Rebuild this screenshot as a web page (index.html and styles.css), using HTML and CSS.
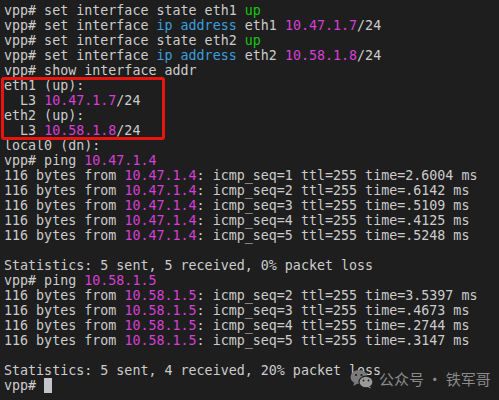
FILE: index.html
```
<!DOCTYPE html>
<html>
<head>
<meta charset="utf-8">
<link rel="stylesheet" href="styles.css">
</head>
<body>
<div class="term">
<pre class="out">vpp# set interface state eth1 <span class="g">up</span>
vpp# set interface <span class="c">ip address</span> eth1 <span class="m">10.47.1.7</span>/24
vpp# set interface state eth2 <span class="g">up</span>
vpp# set interface <span class="c">ip address</span> eth2 <span class="m">10.58.1.8</span>/24
vpp# show interface addr
eth1 (up):
  L3 <span class="m">10.47.1.7</span>/24
eth2 (up):
  L3 <span class="m">10.58.1.8</span>/24
local0 (dn):
vpp# ping <span class="m">10.47.1.4</span>
116 bytes from <span class="m">10.47.1.4</span>: icmp_seq=1 ttl=255 time=2.6004 ms
116 bytes from <span class="m">10.47.1.4</span>: icmp_seq=2 ttl=255 time=.6142 ms
116 bytes from <span class="m">10.47.1.4</span>: icmp_seq=3 ttl=255 time=.5109 ms
116 bytes from <span class="m">10.47.1.4</span>: icmp_seq=4 ttl=255 time=.4125 ms
116 bytes from <span class="m">10.47.1.4</span>: icmp_seq=5 ttl=255 time=.5248 ms

Statistics: 5 sent, 5 received, 0% packet loss
vpp# ping <span class="m">10.58.1.5</span>
116 bytes from <span class="m">10.58.1.5</span>: icmp_seq=2 ttl=255 time=3.5397 ms
116 bytes from <span class="m">10.58.1.5</span>: icmp_seq=3 ttl=255 time=.4673 ms
116 bytes from <span class="m">10.58.1.5</span>: icmp_seq=4 ttl=255 time=.2744 ms
116 bytes from <span class="m">10.58.1.5</span>: icmp_seq=5 ttl=255 time=.3147 ms

Statistics: 5 sent, 4 received, 20% packet loss
vpp# <span class="cursor"> </span></pre>
<div class="hl"></div>
<div class="wm">
<svg class="wm-icon" width="24" height="20" viewBox="0 0 24 20">
<ellipse cx="9" cy="8" rx="8.5" ry="7" fill="#7a7a7a"/>
<path d="M4 13.5 L3.5 17 L7.5 14.5 Z" fill="#7a7a7a"/>
<ellipse cx="16" cy="13" rx="7" ry="5.8" fill="#9a9a9a" stroke="#1e1e1e" stroke-width="1.2"/>
<path d="M20 17.5 L21 19.5 L17.5 18 Z" fill="#9a9a9a"/>
<circle cx="6" cy="6" r="1.1" fill="#1e1e1e"/>
<circle cx="11.5" cy="6" r="1.1" fill="#1e1e1e"/>
<circle cx="13.5" cy="11.5" r="0.9" fill="#1e1e1e"/>
<circle cx="18.5" cy="11.5" r="0.9" fill="#1e1e1e"/>
</svg>
<span class="wm-text">公众号 · 铁军哥</span>
</div>
</div>
</body>
</html>
```
FILE: styles.css
```
html, body {
  margin: 0;
  padding: 0;
  background: #1e1e1e;
}
.term {
  position: relative;
  width: 499px;
  height: 400px;
  overflow: hidden;
  background: #1e1e1e;
}
.out {
  margin: 0;
  padding: 3px 0 0 4px;
  font-family: "DejaVu Sans Mono", "Liberation Mono", monospace;
  font-size: 13.33px;
  line-height: 15px;
  color: #cccccc;
  white-space: pre;
}
.g { color: #16c60c; }
.c { color: #3a9fdd; }
.m { color: #d63fd6; }
.cursor {
  display: inline-block;
  width: 8px;
  height: 15px;
  background: #c4c4cc;
  vertical-align: top;
}
.hl {
  position: absolute;
  left: 1px;
  top: 77px;
  width: 158px;
  height: 57px;
  border: 3px solid #e8150f;
  border-radius: 3px;
}
.wm {
  position: absolute;
  left: 350px;
  top: 369px;
  display: flex;
  align-items: center;
  gap: 5px;
}
.wm-icon {
  display: block;
}
.wm-text {
  font-family: "Noto Sans CJK SC", sans-serif;
  font-size: 15px;
  line-height: 20px;
  color: #8a8a8a;
}
```
